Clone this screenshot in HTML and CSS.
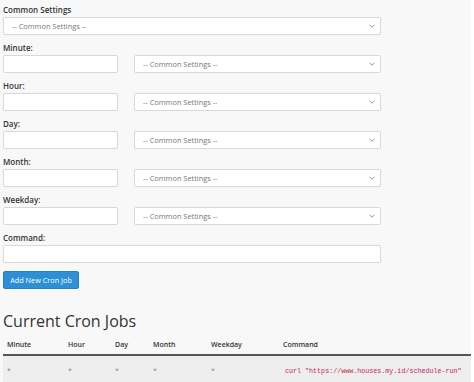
FILE: index.html
```html
<!DOCTYPE html>
<html lang="en">
<head>
    <meta charset="UTF-8">
    <meta name="viewport" content="width=device-width, initial-scale=1.0">
    <title>Cron Jobs</title>
    <link rel="stylesheet" href="styles.css">
</head>
<body>
    <div class="page">
        <form class="cron-form">
            <label class="field-label" for="commonSettings">Common Settings</label>
            <select id="commonSettings" class="wide">
                <option>-- Common Settings --</option>
            </select>

            <label class="field-label" for="minute">Minute:</label>
            <div class="field-row">
                <input type="text" id="minute">
                <select><option>-- Common Settings --</option></select>
            </div>

            <label class="field-label" for="hour">Hour:</label>
            <div class="field-row">
                <input type="text" id="hour">
                <select><option>-- Common Settings --</option></select>
            </div>

            <label class="field-label" for="day">Day:</label>
            <div class="field-row">
                <input type="text" id="day">
                <select><option>-- Common Settings --</option></select>
            </div>

            <label class="field-label" for="month">Month:</label>
            <div class="field-row">
                <input type="text" id="month">
                <select><option>-- Common Settings --</option></select>
            </div>

            <label class="field-label" for="weekday">Weekday:</label>
            <div class="field-row">
                <input type="text" id="weekday">
                <select><option>-- Common Settings --</option></select>
            </div>

            <label class="field-label" for="command">Command:</label>
            <input type="text" id="command" class="wide">

            <button type="button" class="btn-add">Add New Cron Job</button>
        </form>

        <h2>Current Cron Jobs</h2>

        <table class="cron-table">
            <colgroup>
                <col class="c-minute">
                <col class="c-hour">
                <col class="c-day">
                <col class="c-month">
                <col class="c-weekday">
                <col>
            </colgroup>
            <thead>
                <tr>
                    <th>Minute</th>
                    <th>Hour</th>
                    <th>Day</th>
                    <th>Month</th>
                    <th>Weekday</th>
                    <th>Command</th>
                </tr>
            </thead>
            <tbody>
                <tr>
                    <td>*</td>
                    <td>*</td>
                    <td>*</td>
                    <td>*</td>
                    <td>*</td>
                    <td><code>curl "https://www.houses.my.id/schedule-run"</code></td>
                </tr>
            </tbody>
        </table>
    </div>
</body>
</html>
```

FILE: styles.css
```css
body {
    margin: 0;
    padding: 0;
    background-color: #ffffff;
    font-family: "Open Sans", "Liberation Sans", sans-serif;
    color: #333;
}
.page {
    width: 468px;
    min-height: 382px;
    padding: 3px 0 0 3px;
    background-color: #f8f8f8;
}
.cron-form {
    width: 378px;
    display: flex;
    flex-direction: column;
}
.field-label {
    font-size: 8px;
    font-weight: 600;
    line-height: 13px;
    margin-bottom: 1px;
}
select, input {
    box-sizing: border-box;
    height: 18px;
    border: 1px solid #d8d8d8;
    border-radius: 2px;
    background-color: #fff;
    font-family: "Open Sans", "Liberation Sans", sans-serif;
    font-size: 7.4px;
    color: #777;
    margin-bottom: 6px;
}
select {
    -webkit-appearance: none;
    appearance: none;
    padding: 0 8px;
    background-image: url("data:image/svg+xml,%3Csvg xmlns='http://www.w3.org/2000/svg' width='6' height='4' viewBox='0 0 6 4'%3E%3Cpath d='M0.5 0.8 L3 3.2 L5.5 0.8' fill='none' stroke='%23888' stroke-width='0.9'/%3E%3C/svg%3E");
    background-repeat: no-repeat;
    background-position: right 5px center;
    background-size: 6px 4px;
}
.field-row {
    display: flex;
    gap: 16px;
}
.field-row input {
    width: 115px;
}
.field-row select {
    flex: 1;
}
.btn-add {
    align-self: flex-start;
    margin-top: 2px;
    height: 18px;
    width: 76px;
    padding: 0;
    background-color: #2d8fd5;
    color: white;
    border: 1px solid #2680c2;
    border-radius: 2px;
    font-family: "Open Sans", "Liberation Sans", sans-serif;
    font-size: 7.3px;
}
h2 {
    margin: 21px 0 2px 0;
    font-size: 16px;
    line-height: 22px;
    font-weight: normal;
    color: #333;
}
.cron-table {
    width: 468px;
    border-collapse: collapse;
    table-layout: fixed;
}
.c-minute { width: 61px; }
.c-hour { width: 47px; }
.c-day { width: 38px; }
.c-month { width: 58px; }
.c-weekday { width: 72px; }
th, td {
    text-align: left;
    padding: 0 4px;
    font-size: 7px;
}
th {
    height: 20px;
    font-weight: 600;
    border-bottom: 2px solid #555;
}
td {
    height: 28px;
    background-color: #eeeeee;
    color: #888;
}
code {
    padding: 0 2px;
    font-family: "Liberation Mono", monospace;
    font-size: 6.7px;
    color: #c7254e;
}
```
